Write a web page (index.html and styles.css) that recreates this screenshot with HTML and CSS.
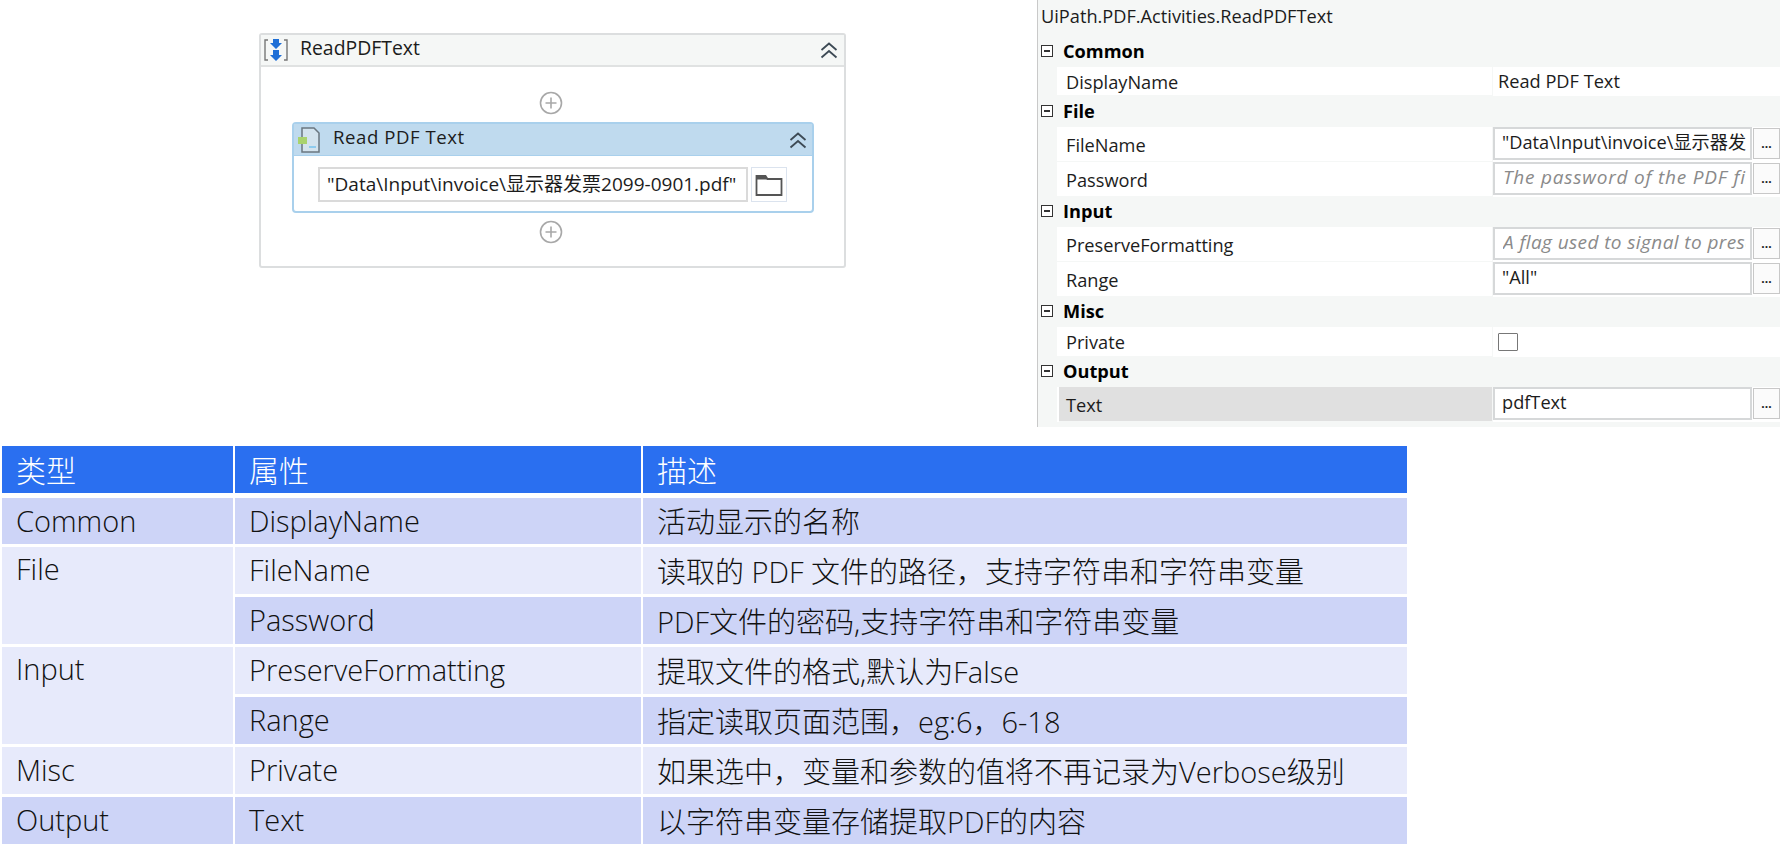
FILE: index.html
```html
<!DOCTYPE html>
<html lang="zh-CN">
<head>
<meta charset="utf-8">
<title>Read PDF Text</title>
<link rel="stylesheet" href="styles.css">
</head>
<body>
<div class="top">
  <section class="canvas">
    <div class="activity">
      <div class="act-head">
        <svg class="seq-icon" width="26" height="26" viewBox="0 0 26 26"><path d="M5 3H2v20h3M21 3h3v20h-3" fill="none" stroke="#777" stroke-width="1.4"/><path d="M10 2h6v4h3l-6 6-6-6h3z" fill="#1f6fd6"/><path d="M10 13h6v5h3l-6 6-6-6h3z" fill="#1f6fd6"/></svg>
        <span class="act-title">ReadPDFText</span>
        <svg class="chev" width="20" height="20" viewBox="0 0 20 20"><path d="M2.5 10l7.5-6.5 7.5 6.500M2.500 17.500l7.500-6.500 7.500 6.500" fill="none" stroke="#3d4a55" stroke-width="1.8"/></svg>
      </div>
      <div class="act-body">
        <svg class="plus" width="24" height="24" viewBox="0 0 24 24"><circle cx="12" cy="12" r="10.5" fill="#fff" stroke="#a8a8a8" stroke-width="1.6"/><path d="M12 6.5v11M6.5 12h11" stroke="#a8a8a8" stroke-width="1.6"/></svg>
        <div class="inner">
          <div class="inner-head">
            <svg class="doc-icon" width="24" height="28" viewBox="0 0 24 28"><path d="M5 2h12l5 5v19H5z" fill="#d3e3ee" stroke="#6b7780" stroke-width="1.5"/><rect x="1" y="11" width="9" height="7" fill="#a9d36e"/><rect x="12" y="20" width="7" height="2" fill="#8ecbee"/></svg>
            <span class="inner-title">Read PDF Text</span>
            <svg class="chev" width="20" height="20" viewBox="0 0 20 20"><path d="M2.5 10l7.500-6.500 7.500 6.500M2.500 17.500l7.500-6.500 7.500 6.500" fill="none" stroke="#3d4a55" stroke-width="1.8"/></svg>
          </div>
          <div class="inner-body">
            <div class="path-box"><span class="clip">"Data\Input\invoice\显示器发票2099-0901.pdf"</span></div>
            <div class="folder-btn">
              <svg width="28" height="22" viewBox="0 0 28 22"><path d="M1.5 6V2h9l2 3h14v16h-25z" fill="#fff" stroke="#555" stroke-width="1.8"/><path d="M1.5 2h9l2 3.5h-11z" fill="#555"/></svg>
            </div>
          </div>
        </div>
        <svg class="plus" width="24" height="24" viewBox="0 0 24 24"><circle cx="12" cy="12" r="10.5" fill="#fff" stroke="#a8a8a8" stroke-width="1.6"/><path d="M12 6.5v11M6.5 12h11" stroke="#a8a8a8" stroke-width="1.6"/></svg>
      </div>
    </div>
  </section>
  <aside class="props">
    <div class="props-title">UiPath.PDF.Activities.ReadPDFText</div>
    <div class="group"><span class="minus"></span>Common</div>
    <div class="row h29"><div class="label">DisplayName</div><div class="value plain">Read PDF Text</div></div>
    <div class="group g31"><span class="minus"></span>File</div>
    <div class="row h35"><div class="label">FileName</div><div class="value"><div class="box"><span class="clip">"Data\Input\invoice\显示器发票2099-0901.pdf"</span></div><div class="more">...</div></div></div>
    <div class="row h35"><div class="label">Password</div><div class="value"><div class="box hint wide"><span class="clip">The password of the PDF file</span></div><div class="more">...</div></div></div>
    <div class="group"><span class="minus"></span>Input</div>
    <div class="row h35"><div class="label">PreserveFormatting</div><div class="value"><div class="box hint"><span class="clip">A flag used to signal to preserve</span></div><div class="more">...</div></div></div>
    <div class="row h35"><div class="label">Range</div><div class="value"><div class="box"><span class="clip">"All"</span></div><div class="more">...</div></div></div>
    <div class="group"><span class="minus"></span>Misc</div>
    <div class="row h30"><div class="label">Private</div><div class="value plain"><span class="check"></span></div></div>
    <div class="group"><span class="minus"></span>Output</div>
    <div class="row h35"><div class="label selected">Text</div><div class="value"><div class="box"><span class="clip">pdfText</span></div><div class="more">...</div></div></div>
  </aside>
</div>
<div class="table">
  <div class="cell head">类型</div><div class="cell head">属性</div><div class="cell head">描述</div>
  <div class="cell dark">Common</div><div class="cell dark">DisplayName</div><div class="cell dark">活动显示的名称</div>
  <div class="cell light span2">File</div><div class="cell light">FileName</div><div class="cell light">读取的 PDF 文件的路径，支持字符串和字符串变量</div>
  <div class="cell dark">Password</div><div class="cell dark">PDF文件的密码,支持字符串和字符串变量</div>
  <div class="cell light span2">Input</div><div class="cell light">PreserveFormatting</div><div class="cell light">提取文件的格式,默认为False</div>
  <div class="cell dark">Range</div><div class="cell dark">指定读取页面范围，eg:6，6-18</div>
  <div class="cell light">Misc</div><div class="cell light">Private</div><div class="cell light">如果选中，变量和参数的值将不再记录为Verbose级别</div>
  <div class="cell dark">Output</div><div class="cell dark">Text</div><div class="cell dark">以字符串变量存储提取PDF的内容</div>
</div>
</body>
</html>
```
FILE: styles.css
```css
* { box-sizing: border-box; }
html, body { margin: 0; padding: 0; background: #fff; }
body { width: 1780px; height: 857px; overflow: hidden; font-family: "Open Sans", "Noto Sans CJK SC", sans-serif; color: #1c1c1c; }

.top { display: flex; height: 446px; align-items: flex-start; }
.canvas { width: 1037px; flex: none; padding: 33px 0 0 259px; }

.activity { width: 587px; height: 235px; border: 2px solid #dcdedf; border-radius: 3px; background: #fff; }
.act-head { height: 32px; display: flex; align-items: center; padding: 0 5px 0 2px; background: #f5f7f6; border-bottom: 2px solid #e0e2e2; }
.act-title { margin: 0 0 4px 11px; font-size: 19.4px; line-height: 24px; flex: 1; }
.act-body { display: flex; flex-direction: column; align-items: center; padding: 24px 3px 0 0; gap: 7px; }
.plus { display: block; }

.inner { width: 522px; height: 91px; margin-left: 4px; border: 2px solid #a9d0ec; border-radius: 4px; background: #fff; }
.inner-head { height: 32px; display: flex; align-items: center; padding: 0 4px 0 3px; background: #bfdaee; border-bottom: 1px solid #a9d0ec; }
.doc-icon { flex: none; }
.inner-title { margin: 0 0 5px 12px; font-size: 18.6px; line-height: 24px; letter-spacing: 0.55px; flex: 1; }
.inner-body { display: flex; padding: 11px 0 0 24px; gap: 3px; }
.path-box { width: 430px; height: 35px; line-height: 31px; padding: 0 8px 0 7px; border: 2px solid #dadada; background: #fff; font-size: 19px; }
.folder-btn { width: 36px; height: 35px; display: flex; align-items: center; justify-content: center; border: 1px solid #dbe3ee; background: #fff; }
.clip { display: block; overflow: hidden; white-space: nowrap; }

.props { width: 743px; height: 427px; flex: none; border-left: 1px solid #c9c9c9; background: #f5f7f6; font-size: 18.2px; }
.props-title { height: 37px; padding: 4px 0 0 3px; }
.group { height: 30px; display: flex; align-items: center; padding: 0 0 3px 3px; font-weight: 700; font-size: 18.2px; color: #000; }
.group.g31 { height: 31px; padding-bottom: 1px; }
.minus { position: relative; width: 12px; height: 12px; margin-right: 10px; border: 1px solid #333; background: #fff; flex: none; }
.minus::after { content: ""; position: absolute; left: 2px; right: 2px; top: 4px; height: 2px; background: #333; }

.row { display: flex; margin-left: 19px; background: #fff; }
.h29 { height: 29px; }
.h30 { height: 30px; }
.h35 { height: 35px; }
.label { width: 435px; flex: none; display: flex; align-items: center; padding: 1px 0 0 9px; border-bottom: 1px solid #f5f7f6; }
.label.selected { width: 433px; margin-left: 2px; padding: 2px 0 0 7px; background: #e0e0e0; }
.value { flex: 1; min-width: 0; display: flex; border-left: 1px solid #f5f7f6; }
.value.plain { align-items: center; padding: 0 0 2px 5px; }
.box { width: 259px; flex: none; height: 33px; line-height: 27px; padding: 0 4px 0 7px; border: 2px solid #d6d8d9; background: #fff; }
.box.hint { font-style: italic; font-size: 19px; letter-spacing: 0.4px; color: #8a8a8a; padding-left: 8px; }
.box.hint.wide { letter-spacing: 0.8px; }
.more { width: 28px; height: 31px; margin: 1px 0 0 1px; border: 1px solid #c8c8c8; background: #fbfbfb; font-size: 12px; font-weight: 700; line-height: 30px; text-align: center; }
.check { width: 20px; height: 18px; margin-top: 2px; border: 1px solid #777; border-radius: 1px; background: #fff; }

.table { display: grid; grid-template-columns: 231px 406px 764px; grid-template-rows: 49px 46px 47px 47px 47px 47px 47px 47px; column-gap: 2px; row-gap: 3px; margin-left: 2px; font-weight: 300; font-size: 29px; }
.cell { display: flex; align-items: center; padding: 0 0 2px 14px; color: #111; white-space: pre; }
.head { height: 47px; background: #2a6ff0; color: #fff; font-size: 30px; }
.dark { background: #cdd4f7; }
.light { background: #e7eafb; }
.span2 { grid-row: span 2; align-items: flex-start; padding-top: 2px; }
```
